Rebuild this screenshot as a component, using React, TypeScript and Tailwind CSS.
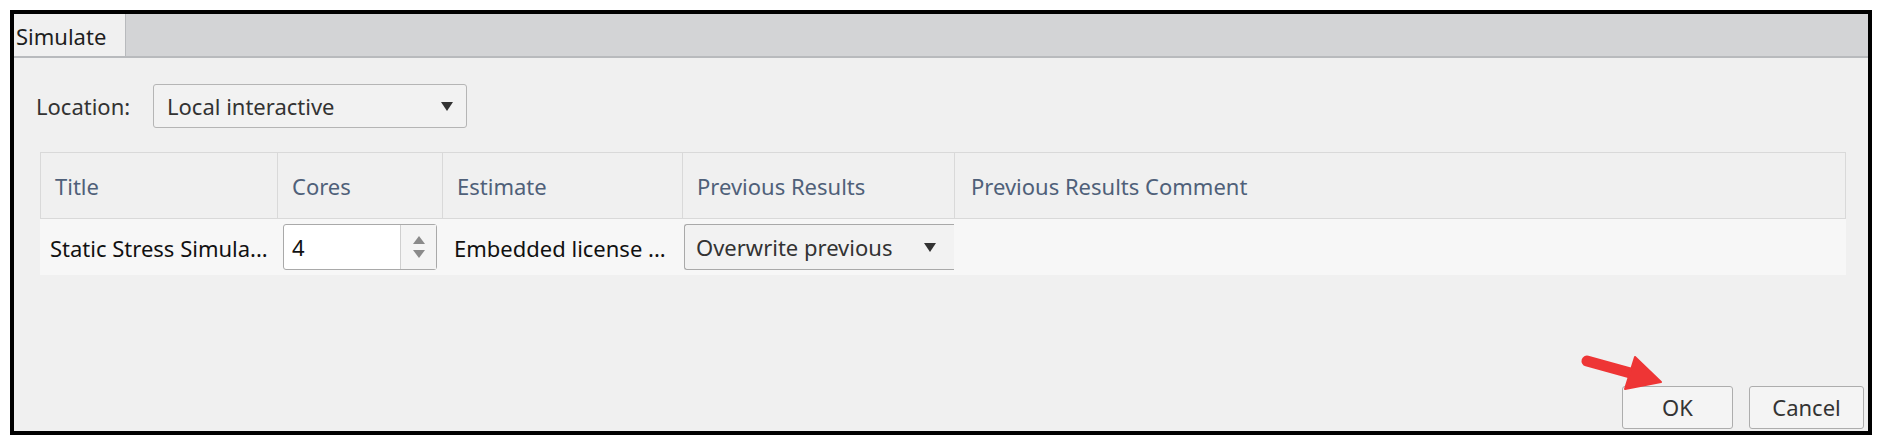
import React from 'react';

const font = { fontFamily: '"Noto Sans", "Open Sans", Arial, sans-serif' };

const Caret = () => (
  <svg width="12" height="9" viewBox="0 0 12 9" className="shrink-0">
    <path d="M0 0 L12 0 L6 9 Z" fill="#333" />
  </svg>
);

const App: React.FC = () => {
  return (
    <div className="w-[1878px] h-[443px] bg-white pt-[10px] pl-[10px]" style={font}>
      <div className="relative w-[1862px] h-[425px] border-[4px] border-black bg-[#f0f0f0] flex flex-col">
        {/* Tab strip */}
        <div className="h-[44px] bg-[#d3d4d6] border-b-2 border-[#b8babd] flex items-stretch">
          <div className="w-[112px] bg-[#f0f0f0] border-r border-[#b8babd] flex items-center pl-[2px] pt-[3px] text-[22px] text-[#1e1e1e]">
            Simulate
          </div>
        </div>

        {/* Body */}
        <div className="flex-1 flex flex-col pl-[22px] pr-[20px]">
          <div className="flex items-center mt-[26px] h-[44px]">
            <span className="text-[22px] text-[#333] w-[117px]">Location:</span>
            <div className="w-[314px] h-[44px] rounded-[3px] border border-[#b5b5b5] bg-[#f2f2f2] flex items-center justify-between pl-[13px] pr-[13px] text-[22px] text-[#333]">
              <span>Local interactive</span>
              <Caret />
            </div>
          </div>

          {/* Table */}
          <div className="ml-[4px] mt-[24px] w-[1806px] flex flex-col">
            <div className="h-[67px] flex border border-[#d9d9d9] bg-[#f0f0f0] text-[22px] text-[#4f6079]">
              <div className="w-[237px] border-r border-[#d9d9d9] flex items-center pl-[14px] pt-[2px]">Title</div>
              <div className="w-[165px] border-r border-[#d9d9d9] flex items-center pl-[14px] pt-[2px]">Cores</div>
              <div className="w-[240px] border-r border-[#d9d9d9] flex items-center pl-[14px] pt-[2px]">Estimate</div>
              <div className="w-[272px] border-r border-[#d9d9d9] flex items-center pl-[14px] pt-[2px]">Previous Results</div>
              <div className="flex-1 flex items-center pl-[16px] pt-[2px]">Previous Results Comment</div>
            </div>
            <div className="h-[56px] flex bg-[#f7f7f7] text-[22px] text-[#111]">
              <div className="w-[237px] flex items-center pl-[10px] pt-[2px] whitespace-nowrap overflow-hidden">Static Stress Simula...</div>
              <div className="w-[165px] flex items-center pl-[6px]">
                <div className="w-[154px] h-[46px] rounded-[3px] border border-[#a9a9a9] bg-white flex">
                  <div className="flex-1 flex items-center pl-[8px] text-[#111]">4</div>
                  <div className="w-[36px] border-l border-[#cfcfcf] bg-[#f4f4f4] flex flex-col items-center justify-center gap-[6px]">
                    <svg width="12" height="8" viewBox="0 0 12 8"><path d="M0 8 L12 8 L6 0 Z" fill="#8a8a8a" /></svg>
                    <svg width="12" height="8" viewBox="0 0 12 8"><path d="M0 0 L12 0 L6 8 Z" fill="#8a8a8a" /></svg>
                  </div>
                </div>
              </div>
              <div className="w-[240px] flex items-center pl-[12px] pt-[2px] whitespace-nowrap overflow-hidden">Embedded license ...</div>
              <div className="w-[272px] flex items-center pl-[2px]">
                <div className="w-[270px] h-[46px] rounded-l-[3px] border border-r-0 border-[#a9a9a9] bg-[#f2f2f2] flex items-center justify-between pl-[11px] pr-[18px] text-[#333]">
                  <span>Overwrite previous</span>
                  <Caret />
                </div>
              </div>
              <div className="flex-1" />
            </div>
          </div>

          {/* Buttons */}
          <div className="flex-1" />
          <div className="flex justify-end gap-[16px] mb-[2px] -mr-[16px]">
            <button className="w-[111px] h-[43px] rounded-[3px] border border-[#adadad] bg-[#f4f4f4] text-[22px] text-[#333]">OK</button>
            <button className="w-[115px] h-[43px] rounded-[3px] border border-[#adadad] bg-[#f4f4f4] text-[22px] text-[#333]">Cancel</button>
          </div>
        </div>

        {/* Red callout arrow */}
        <svg className="absolute left-[1566px] top-[337px]" width="92" height="48" viewBox="0 0 92 48">
          <path d="M7 10 L54 23" stroke="#ee3535" strokeWidth="11" strokeLinecap="round" />
          <path d="M55 6 L81 31 L45 38 Z" fill="#ee3535" strokeLinejoin="round" stroke="#ee3535" strokeWidth="2" />
        </svg>
      </div>
    </div>
  );
};

export default App;
